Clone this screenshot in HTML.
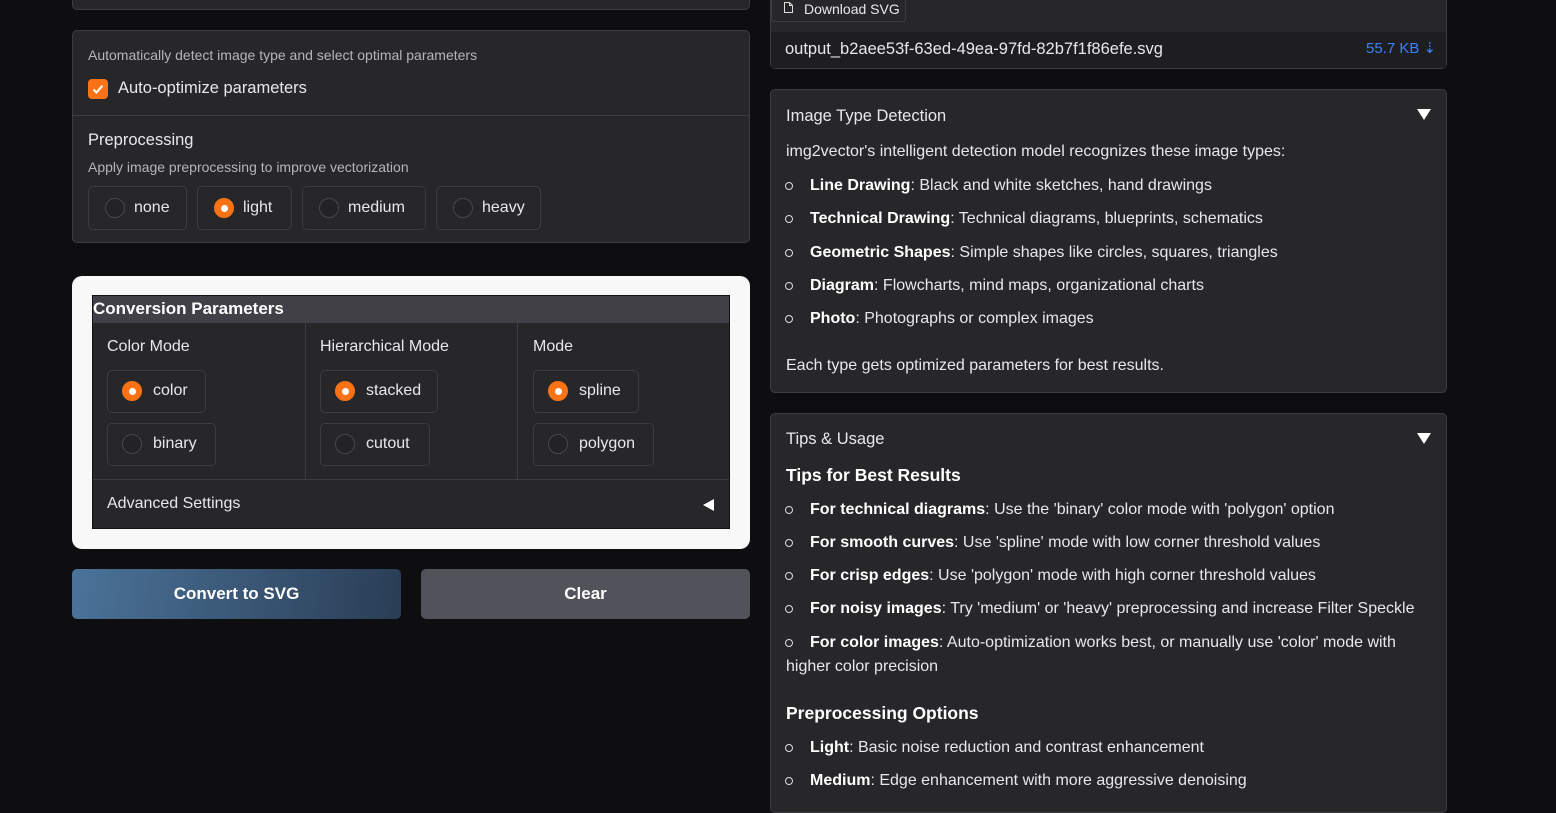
<!DOCTYPE html>
<html><head><meta charset="utf-8"><style>
*{box-sizing:border-box;margin:0;padding:0}
body{width:1556px;height:800px;overflow:hidden;background:#0e0e10;font-family:"Liberation Sans",sans-serif;color:#e8e8ea;position:relative}
.a{position:absolute}
.t{position:absolute;line-height:20px;white-space:nowrap;font-size:16px}
.panel{position:absolute;background:#27272a;border:1px solid #3c3c42;border-radius:5px}
.sm{font-size:14px;color:#b4b4bc}
.opt{position:absolute;border:1px solid #3c3c42;border-radius:5px;background:#27272a;height:44px}
.rd{position:absolute;left:16px;top:11px;width:20px;height:20px;border-radius:50%;border:1px solid #46464c;background:#232326}
.rd.on{background:#f97316;border-color:#f97316}
.rd.on:after{content:"";position:absolute;left:6px;top:6px;width:7px;height:7px;border-radius:50%;background:#fff}
.opt span{position:absolute;left:45px;top:11px;font-size:16px;line-height:20px}
b{font-weight:bold;color:#fff}
.li{position:absolute;left:15px;font-size:16px;line-height:20px;white-space:nowrap}
.li:before{content:"";position:absolute;left:-1px;top:6px;width:6px;height:6px;border:1px solid #ddd;border-radius:50%}
.li i{font-style:normal;padding-left:24px}
</style></head><body>
<div class="panel" style="left:72px;top:-10px;width:678px;height:20px"></div>
<div class="panel" style="left:72px;top:30px;width:678px;height:213px">
  <div class="t sm" style="left:15px;top:14px">Automatically detect image type and select optimal parameters</div>
  <div class="a" style="left:15px;top:48px;width:20px;height:20px;border-radius:4px;background:#f97316"><svg width="20" height="20"><path d="M5.5 10.5l3 3 6-7" stroke="#fff" stroke-width="2" fill="none"/></svg></div>
  <div class="t" style="left:45px;top:47px;font-size:16.5px">Auto-optimize parameters</div>
  <div class="a" style="left:0;top:84px;width:676px;height:1px;background:#3c3c42"></div>
  <div class="t" style="left:15px;top:99px;font-size:16.5px">Preprocessing</div>
  <div class="t sm" style="left:15px;top:126px">Apply image preprocessing to improve vectorization</div>
  <div class="opt" style="left:15px;top:155px;width:99px"><div class="rd"></div><span>none</span></div>
  <div class="opt" style="left:124px;top:155px;width:95px"><div class="rd on"></div><span>light</span></div>
  <div class="opt" style="left:229px;top:155px;width:124px"><div class="rd"></div><span>medium</span></div>
  <div class="opt" style="left:363px;top:155px;width:105px"><div class="rd"></div><span>heavy</span></div>
</div>
<div class="a" style="left:72px;top:276px;width:678px;height:273px;background:#f8f8f8;border-radius:10px"></div>
<div class="a" style="left:92px;top:295px;width:638px;height:234px;background:#27272a;border:1px solid #111">
  <div class="a" style="left:0;top:0;width:636px;height:27px;background:#404046"></div>
  <div class="t" style="left:0;top:3px;font-size:17px;font-weight:bold;color:#fff">Conversion Parameters</div>
  <div class="a" style="left:212px;top:27px;width:1px;height:157px;background:#3c3c42"></div>
  <div class="a" style="left:424px;top:27px;width:1px;height:157px;background:#3c3c42"></div>
  <div class="a" style="left:0;top:183px;width:636px;height:1px;background:#3c3c42"></div>
  <div class="t" style="left:14px;top:41px">Color Mode</div>
  <div class="t" style="left:227px;top:41px">Hierarchical Mode</div>
  <div class="t" style="left:440px;top:41px">Mode</div>
  <div class="opt" style="left:14px;top:74px;width:99px;height:43px"><div class="rd on" style="left:14px;top:10px"></div><span style="left:45px;top:10px">color</span></div>
  <div class="opt" style="left:14px;top:127px;width:109px;height:43px"><div class="rd" style="left:14px;top:10px"></div><span style="left:45px;top:10px">binary</span></div>
  <div class="opt" style="left:227px;top:74px;width:118px;height:43px"><div class="rd on" style="left:14px;top:10px"></div><span style="left:45px;top:10px">stacked</span></div>
  <div class="opt" style="left:227px;top:127px;width:110px;height:43px"><div class="rd" style="left:14px;top:10px"></div><span style="left:45px;top:10px">cutout</span></div>
  <div class="opt" style="left:440px;top:74px;width:106px;height:43px"><div class="rd on" style="left:14px;top:10px"></div><span style="left:45px;top:10px">spline</span></div>
  <div class="opt" style="left:440px;top:127px;width:121px;height:43px"><div class="rd" style="left:14px;top:10px"></div><span style="left:45px;top:10px">polygon</span></div>
  <div class="t" style="left:14px;top:198px">Advanced Settings</div>
  <svg class="a" style="left:609px;top:202px" width="14" height="14"><path d="M12 1L1 7l11 6z" fill="#fff"/></svg>
</div>
<div class="a" style="left:72px;top:569px;width:329px;height:50px;border-radius:5px;background:linear-gradient(100deg,#4b7399,#2a3d55);color:#fff;font-weight:bold;font-size:17px;text-align:center;line-height:50px">Convert to SVG</div>
<div class="a" style="left:421px;top:569px;width:329px;height:50px;border-radius:5px;background:#52525b;color:#fff;font-weight:bold;font-size:17px;text-align:center;line-height:50px">Clear</div>

<div class="panel" style="left:770px;top:-10px;width:677px;height:79px;background:#27272a"></div>
<div class="a" style="left:771px;top:-5px;width:135px;height:27px;background:#27272a;border:1px solid #3c3c42;border-radius:0 0 4px 4px"></div>
<svg class="a" style="left:784px;top:2px" width="9" height="11"><path d="M0.5 0.5h5l3 3v7h-8z M5.5 0.5v3h3" stroke="#ddd" fill="none"/></svg>
<div class="t" style="left:804px;top:-1px;font-size:14px">Download SVG</div>
<div class="a" style="left:771px;top:32px;width:675px;height:36px;background:#1e1e21"></div>
<div class="t" style="left:785px;top:39px;font-size:16.5px">output_b2aee53f-63ed-49ea-97fd-82b7f1f86efe.svg</div>
<div class="t" style="left:1366px;top:39px;font-size:15px;color:#3b82f6">55.7 KB ⇣</div>

<div class="panel" style="left:770px;top:89px;width:677px;height:304px">
  <div class="t" style="left:15px;top:16px;font-size:16.5px">Image Type Detection</div>
  <svg class="a" style="left:646px;top:18px" width="14" height="13"><path d="M0 1h14L7 12z" fill="#fff"/></svg>
  <div class="t" style="left:15px;top:52px">img2vector's intelligent detection model recognizes these image types:</div>
  <div class="li" style="top:86px"><i><b>Line Drawing</b>: Black and white sketches, hand drawings</i></div>
  <div class="li" style="top:119px"><i><b>Technical Drawing</b>: Technical diagrams, blueprints, schematics</i></div>
  <div class="li" style="top:153px"><i><b>Geometric Shapes</b>: Simple shapes like circles, squares, triangles</i></div>
  <div class="li" style="top:186px"><i><b>Diagram</b>: Flowcharts, mind maps, organizational charts</i></div>
  <div class="li" style="top:219px"><i><b>Photo</b>: Photographs or complex images</i></div>
  <div class="t" style="left:15px;top:266px">Each type gets optimized parameters for best results.</div>
</div>

<div class="panel" style="left:770px;top:413px;width:677px;height:400px">
  <div class="t" style="left:15px;top:15px;font-size:16.5px">Tips &amp; Usage</div>
  <svg class="a" style="left:646px;top:18px" width="14" height="13"><path d="M0 1h14L7 12z" fill="#fff"/></svg>
  <div class="t" style="left:15px;top:51px;font-size:17.5px;font-weight:bold;color:#fff">Tips for Best Results</div>
  <div class="li" style="top:86px"><i><b>For technical diagrams</b>: Use the 'binary' color mode with 'polygon' option</i></div>
  <div class="li" style="top:119px"><i><b>For smooth curves</b>: Use 'spline' mode with low corner threshold values</i></div>
  <div class="li" style="top:152px"><i><b>For crisp edges</b>: Use 'polygon' mode with high corner threshold values</i></div>
  <div class="li" style="top:185px"><i><b>For noisy images</b>: Try 'medium' or 'heavy' preprocessing and increase Filter Speckle</i></div>
  <div class="li" style="top:219px"><i><b>For color images</b>: Auto-optimization works best, or manually use 'color' mode with</i></div>
  <div class="t" style="left:15px;top:243px">higher color precision</div>
  <div class="t" style="left:15px;top:289px;font-size:17.5px;font-weight:bold;color:#fff">Preprocessing Options</div>
  <div class="li" style="top:324px"><i><b>Light</b>: Basic noise reduction and contrast enhancement</i></div>
  <div class="li" style="top:357px"><i><b>Medium</b>: Edge enhancement with more aggressive denoising</i></div>
</div>
</body></html>
